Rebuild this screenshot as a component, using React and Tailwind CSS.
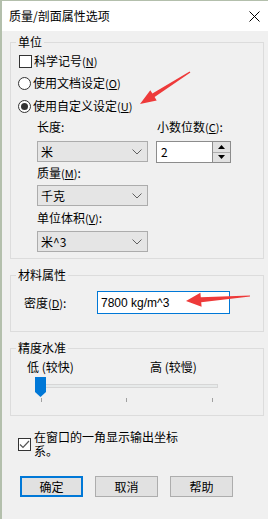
import React from 'react';

const Key = ({ k }) => (
    <span className="text-[11px]">
        (<span className="underline underline-offset-[1px]">{k}</span>)
    </span>
);

const Combo = ({ value }) => (
    <div className="h-[21px] w-[111px] bg-[#e5e5e5] border border-[#acacac] flex items-center justify-between pl-[3px] pr-[5px]">
        <span>{value}</span>
        <svg width="10" height="6" viewBox="0 0 10 6">
            <path d="M0.5 0.5 L5 5 L9.5 0.5" fill="none" stroke="#606060" strokeWidth="1" />
        </svg>
    </div>
);

const Group = ({ title, className = '', children }) => (
    <fieldset className={`w-[254px] border border-[#dcdcdc] ${className}`}>
        <legend className="ml-[5px] px-[2px] leading-[14px]">{title}</legend>
        {children}
    </fieldset>
);

const Radio = ({ checked }) => (
    <span className="w-[13px] h-[13px] rounded-full border border-[#333] bg-white flex items-center justify-center">
        {checked && <span className="w-[7px] h-[7px] rounded-full bg-[#333]" />}
    </span>
);

const Button = ({ label, primary }) => (
    <button
        className={`w-[63px] h-[21px] bg-[#e1e1e1] flex items-center justify-center ${
            primary ? 'border-2 border-[#0078d7]' : 'border border-[#adadad]'
        }`}
    >
        {label}
    </button>
);

const App = () => {
    return (
        <div className="relative w-[268px] h-[519px] bg-[#f0f0f0] border-l-2 border-t border-[#b3bfac] text-[12px] text-black font-['Noto_Sans_CJK_SC','Microsoft_YaHei',sans-serif] overflow-hidden">
            {/* title bar */}
            <div className="h-[30px] bg-white flex items-center justify-between pl-[7px] pr-[8px]">
                <span>质量/剖面属性选项</span>
                <svg width="11" height="11" viewBox="0 0 11 11">
                    <path d="M0.5 0.5 L10.5 10.5 M10.5 0.5 L0.5 10.5" stroke="#000" strokeWidth="1" />
                </svg>
            </div>

            <div className="px-[8px]">
                <Group title="单位" className="mt-[4px] pb-[6px]">
                    <div className="mt-[5px] h-[14px] flex items-center gap-[2px] ml-[8px]">
                        <span className="w-[13px] h-[13px] border border-[#333] bg-white" />
                        <span>
                            科学记号<Key k="N" />
                        </span>
                    </div>
                    <div className="mt-[8px] h-[14px] flex items-center gap-[2px] ml-[7px]">
                        <Radio />
                        <span>
                            使用文档设定<Key k="O" />
                        </span>
                    </div>
                    <div className="mt-[9px] h-[14px] flex items-center gap-[2px] ml-[7px]">
                        <Radio checked />
                        <span>
                            使用自定义设定<Key k="U" />
                        </span>
                    </div>

                    <div className="mt-[7px] flex ml-[26px]">
                        <div className="w-[111px] flex flex-col">
                            <div className="h-[14px] leading-[14px]">长度:</div>
                            <div className="mt-[7px]">
                                <Combo value="米" />
                            </div>
                            <div className="mt-[4px] h-[14px] leading-[14px]">
                                质量<Key k="M" />:
                            </div>
                            <div className="mt-[5px]">
                                <Combo value="千克" />
                            </div>
                            <div className="mt-[5px] h-[14px] leading-[14px]">
                                单位体积<Key k="V" />:
                            </div>
                            <div className="mt-[6px]">
                                <Combo value="米^3" />
                            </div>
                        </div>
                        <div className="ml-[8px] flex flex-col">
                            <div className="h-[14px] leading-[14px] ml-[1px]">
                                小数位数<Key k="C" />:
                            </div>
                            <div className="mt-[7px] flex h-[22px] w-[75px]">
                                <div className="flex-1 bg-white border border-[#8c8c8c] border-r-0 pl-[4px] flex items-center">
                                    2
                                </div>
                                <div className="w-[19px] flex flex-col border border-[#8c8c8c] bg-white">
                                    <div className="flex-1 bg-[#e1e1e1] border-b border-[#adadad] flex items-center justify-center">
                                        <svg width="7" height="4" viewBox="0 0 7 4">
                                            <path d="M0 4 L3.5 0 L7 4 Z" fill="#000" />
                                        </svg>
                                    </div>
                                    <div className="flex-1 bg-[#e1e1e1] flex items-center justify-center">
                                        <svg width="7" height="4" viewBox="0 0 7 4">
                                            <path d="M0 0 L3.5 4 L7 0 Z" fill="#000" />
                                        </svg>
                                    </div>
                                </div>
                            </div>
                        </div>
                    </div>
                </Group>

                <Group title="材料属性" className="mt-[9px] pb-[17px]">
                    <div className="mt-[9px] flex items-center">
                        <span className="ml-[13px] w-[73px]">
                            密度<Key k="D" />:
                        </span>
                        <div className="w-[133px] h-[23px] bg-white border border-[#0078d7] pl-[3px] flex items-center font-['Liberation_Sans',sans-serif]">
                            7800 kg/m^3
                        </div>
                    </div>
                </Group>

                <Group title="精度水准" className="mt-[9px] pb-[12px]">
                    <div className="mt-[5px] h-[14px] leading-[14px] flex">
                        <span className="ml-[16px] w-[123px]">低 (较快)</span>
                        <span>高 (较慢)</span>
                    </div>
                    <svg className="mt-[3px] ml-[24px] block" width="185" height="26" viewBox="0 0 185 26">
                        <rect x="8.5" y="7.5" width="174" height="3" fill="#e7eaea" stroke="#d6d6d6" />
                        <path d="M6.5 21 V25 M91.5 21 V25 M177.5 21 V25" stroke="#a0a0a0" strokeWidth="1" />
                        <path d="M0 0 H11 V15 L5.5 20 L0 15 Z" fill="#0078d7" />
                    </svg>
                </Group>

                <div className="mt-[14px] flex items-center gap-[3px] ml-[8px]">
                    <span className="w-[13px] h-[13px] border border-[#333] bg-white flex items-center justify-center">
                        <svg width="11" height="9" viewBox="0 0 11 9">
                            <path d="M1 4.5 L4 7.5 L10 1" fill="none" stroke="#555" strokeWidth="1.2" />
                        </svg>
                    </span>
                    <span className="w-[150px] leading-[14px]">在窗口的一角显示输出坐标系。</span>
                </div>

                <div className="mt-[18px] ml-[10px] flex gap-[12px]">
                    <Button label="确定" primary />
                    <Button label="取消" />
                    <Button label="帮助" />
                </div>
            </div>

            {/* red annotation arrows */}
            <svg className="absolute left-[-2px] top-[-1px] pointer-events-none" width="268" height="519" viewBox="0 0 268 519">
                <polygon
                    points="189.6,71.4 152.4,93.6 150.3,90.2 140,104 156.7,100.4 154.6,97 190.4,72.6"
                    fill="#ee3a3a"
                />
                <polygon
                    points="250,295.4 200.8,297.3 200.4,292.8 186,301 201.6,306.8 201.2,302.3 250,296.6"
                    fill="#ee3a3a"
                />
            </svg>
        </div>
    );
};

export default App;
